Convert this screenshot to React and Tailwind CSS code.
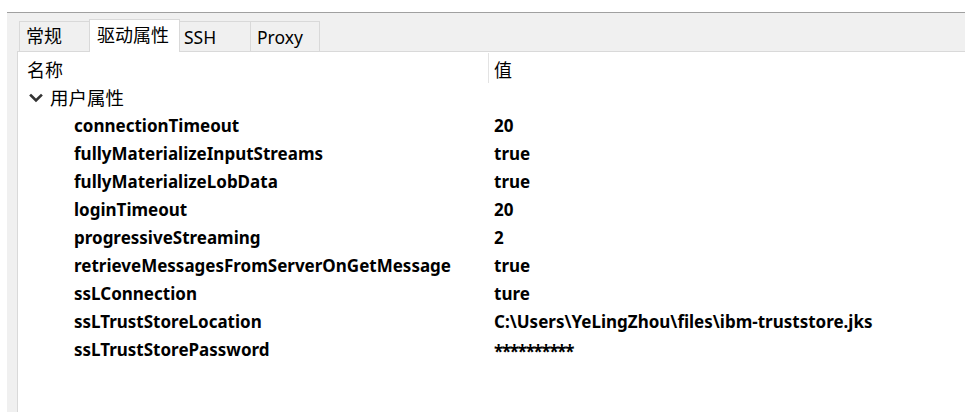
import React from "react";

const rows = [
  ["connectionTimeout", "20"],
  ["fullyMaterializeInputStreams", "true"],
  ["fullyMaterializeLobData", "true"],
  ["loginTimeout", "20"],
  ["progressiveStreaming", "2"],
  ["retrieveMessagesFromServerOnGetMessage", "true"],
  ["ssLConnection", "ture"],
  ["ssLTrustStoreLocation", "C:\\Users\\YeLingZhou\\files\\ibm-truststore.jks"],
  ["ssLTrustStorePassword", "**********"],
];

const font = { fontFamily: '"Noto Sans", "Noto Sans CJK SC", sans-serif' };

function Chevron() {
  return (
    <svg width="14" height="10" viewBox="0 0 14 10" className="block">
      <path d="M2 2.5 L7 7.5 L12 2.5" fill="none" stroke="#333" strokeWidth="2.6" strokeLinecap="square" />
    </svg>
  );
}

export default function App() {
  return (
    <div className="w-[965px] h-[412px] bg-white flex overflow-hidden text-black" style={font}>
      <div className="w-[7px] shrink-0 bg-white" />
      <div className="flex-1 flex flex-col mt-[12px] border-t border-[#a0a0a0] bg-[#f0f0f0] pl-[10px]">
        <div className="h-[38px] flex items-end pl-[2px] shrink-0 relative z-10">
          <div className="w-[70px] h-[30px] border-t border-l border-[#d9d9d9] pl-[6px] text-[18px] leading-[28px]">常规</div>
          <div className="w-[91px] h-[33px] -mb-px bg-white border-t border-l border-r border-[#d9d9d9] pl-[7px] text-[18px] leading-[30px]">驱动属性</div>
          <div className="w-[70px] h-[30px] border-t border-[#d9d9d9] pl-[4px] text-[17.5px] leading-[30px]">SSH</div>
          <div className="w-[70px] h-[30px] border-t border-l border-r border-[#d9d9d9] pl-[6px] text-[17.5px] leading-[30px]">Proxy</div>
        </div>
        <div className="flex-1 bg-white border-t border-l border-[#d9d9d9]">
          <div className="flex h-[32px] items-start">
            <div className="w-[470px] pl-[9px] pt-[4px] text-[18px] leading-[28px]">名称</div>
            <div className="w-px h-[30px] mt-px bg-[#e3e3e3]" />
            <div className="pl-[5px] pt-[4px] text-[18px] leading-[28px]">值</div>
          </div>
          <div className="flex h-[28px] items-center">
            <div className="w-[11px]" />
            <Chevron />
            <div className="pl-[7px] text-[18.5px] leading-[28px]">用户属性</div>
          </div>
          {rows.map(([k, v]) => (
            <div key={k} className="flex h-[28px] items-center font-bold text-[17px]">
              <div className="w-[471px] pl-[56px] whitespace-nowrap">{k}</div>
              <div className={"pl-[5px] whitespace-nowrap" + (v.startsWith("*") ? " tracking-[-1.3px] pt-[3px]" : "")}>{v}</div>
            </div>
          ))}
        </div>
      </div>
    </div>
  );
}
